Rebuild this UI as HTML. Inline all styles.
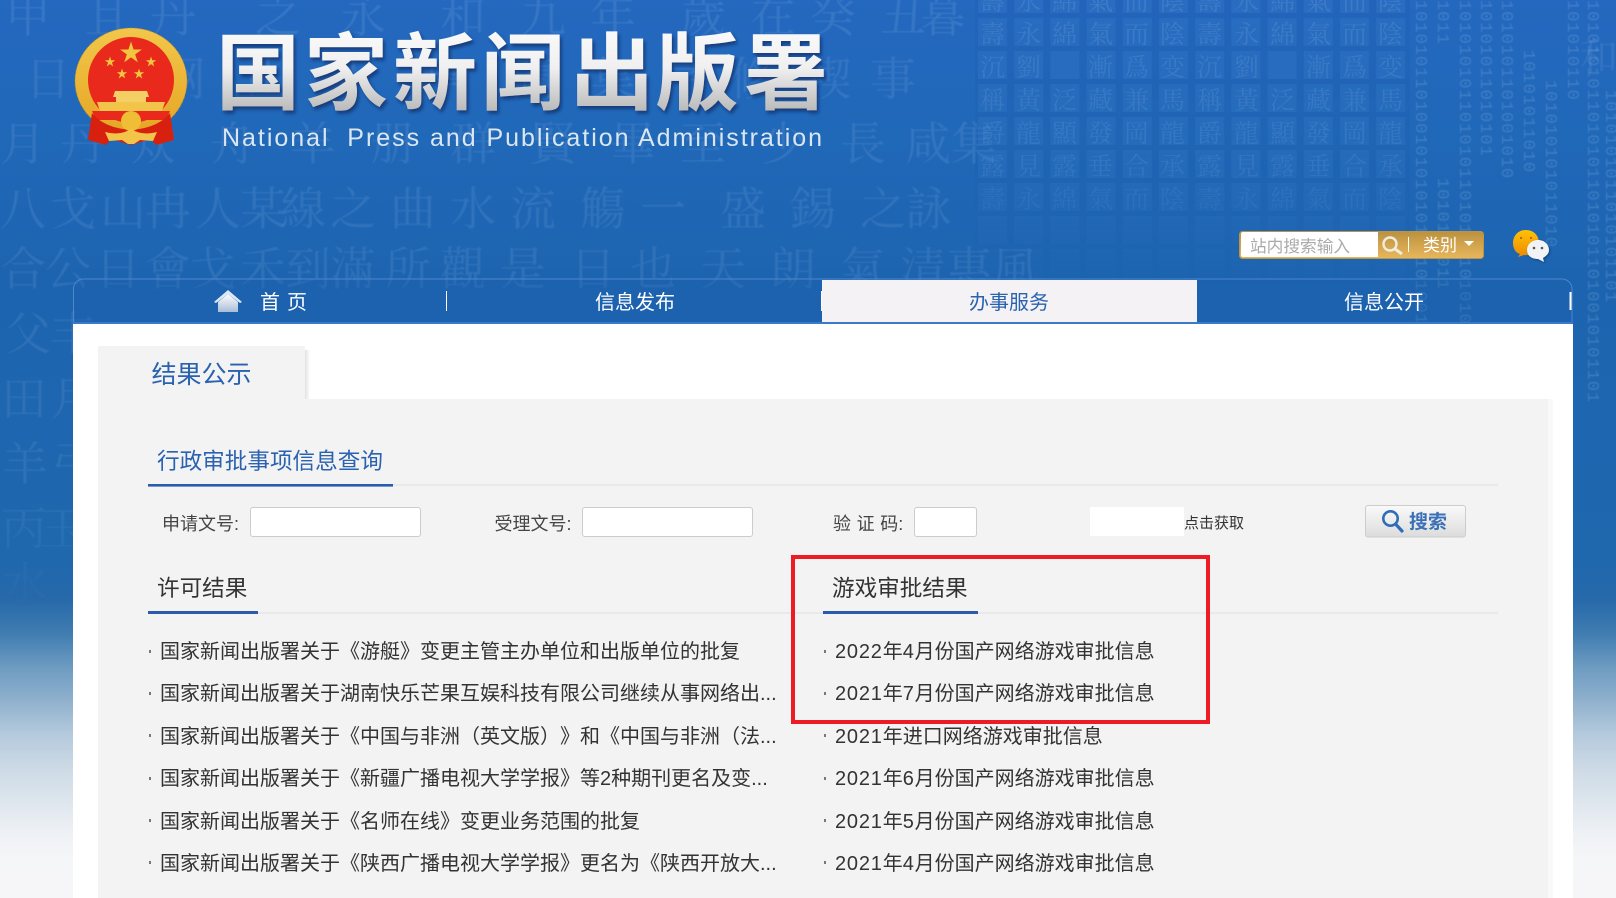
<!DOCTYPE html>
<html lang="zh-CN">
<head>
<meta charset="utf-8">
<title>国家新闻出版署</title>
<style>
html,body{margin:0;padding:0;width:1616px;height:898px;overflow:hidden}
body{position:relative;font-family:"Liberation Sans","Noto Sans CJK SC",sans-serif;color:#333;text-spacing-trim:space-all;
background:linear-gradient(180deg,#2468bf 0,#2068b8 140px,#1d64b0 280px,#1f68ae 560px,#2769aa 600px,#3f7cb0 633px,#6d9bc1 667px,#8fb0cd 700px,#b3c9dc 733px,#ccd9e5 767px,#dde5ed 800px,#eef1f5 833px,#f5f6f8 860px,#f6f6f8 898px)}
.a{position:absolute;white-space:nowrap}
svg{position:absolute;left:0;top:0}
.nav{font-size:20px;line-height:30px;color:#fff;top:288px}
.row{font-size:20px;line-height:30px;color:#333;font-feature-settings:"palt" 0;text-spacing-trim:space-all}
.row i{font-style:normal;letter-spacing:.8px}
.lab{font-size:18px;line-height:26px;color:#444}
.inp{position:absolute;background:#fff;border:1px solid #ccc;border-radius:3px;box-sizing:border-box;top:507px;height:30px}
.dot{position:absolute;width:2px;height:3px;background:#777}
</style>
</head>
<body>
<svg width="1616" height="898" viewBox="0 0 1616 898" aria-hidden="true">
<defs>
<mask id="m1"><rect x="0" y="0" width="1616" height="620" fill="url(#fm)"/></mask>
<linearGradient id="fm" x1="0" y1="0" x2="0" y2="1"><stop offset="0" stop-color="#fff"/><stop offset=".8" stop-color="#ccc"/><stop offset="1" stop-color="#000"/></linearGradient>
<mask id="m2"><rect x="960" y="0" width="460" height="290" fill="url(#fs)"/></mask>
<linearGradient id="fs" x1="0" y1="0" x2="0" y2="1"><stop offset="0" stop-color="#fff"/><stop offset=".55" stop-color="#bbb"/><stop offset="1" stop-color="#000"/></linearGradient>
<pattern id="seal" x="975" y="-17" width="36.2" height="33" patternUnits="userSpaceOnUse"><rect width="36.2" height="33" fill="#103f88" fill-opacity=".16"/><rect x="3" y="2" width="29" height="28" fill="#3b7fd2" fill-opacity=".5"/></pattern>
<linearGradient id="silver" x1="0" y1="0" x2="0" y2="1"><stop offset="0" stop-color="#fff"/><stop offset=".5" stop-color="#f0f0f0"/><stop offset="1" stop-color="#a5a5a5"/></linearGradient>
<filter id="sh" x="-5%" y="-10%" width="110%" height="125%"><feDropShadow dx="2" dy="3" stdDeviation="1.5" flood-color="#0a2a60" flood-opacity=".7"/></filter>
<filter id="bl" x="-5%" y="-5%" width="110%" height="110%"><feGaussianBlur stdDeviation=".5"/></filter>
<linearGradient id="gold" x1="0" y1="0" x2="0" y2="1"><stop offset="0" stop-color="#f2c74a"/><stop offset="1" stop-color="#e5a524"/></linearGradient>
<linearGradient id="sb" x1="0" y1="0" x2="0" y2="1"><stop offset="0" stop-color="#bb913f"/><stop offset="1" stop-color="#e8b75c"/></linearGradient>
<linearGradient id="yb" x1="0" y1="0" x2="0" y2="1"><stop offset="0" stop-color="#ffc107"/><stop offset="1" stop-color="#ee8a00"/></linearGradient>
<linearGradient id="hb" x1="0" y1="0" x2="0" y2="1"><stop offset="0" stop-color="#fff"/><stop offset="1" stop-color="#a9bdd6"/></linearGradient>
<linearGradient id="btn" x1="0" y1="0" x2="0" y2="1"><stop offset="0" stop-color="#fafafa"/><stop offset="1" stop-color="#dcdcdc"/></linearGradient>
<linearGradient id="tabsh" x1="0" y1="0" x2="1" y2="0"><stop offset="0" stop-color="#e2e2e2"/><stop offset="1" stop-color="#fff"/></linearGradient>
<polygon id="st" points="0,-1 .225,-.309 .951,-.309 .363,.118 .588,.809 0,.382 -.588,.809 -.363,.118 -.951,-.309 -.225,-.309"/>
</defs>

<!-- faint background calligraphy -->
<g mask="url(#m1)" filter="url(#bl)" font-family="'Noto Serif CJK SC','WenQuanYi Zen Hei',serif" font-size="46" fill="#9cc3ee" fill-opacity=".16">
<text x="5 85 150 255 340 440 520 590 680 750 810 880 920" y="32">甲且丹之永和九年歲在癸丑暮</text>
<text x="25 85 160 245 330 420 510 590 660 730 805 870" y="95">日火网山水亭蘭集序修禊事</text>
<text x="0 60 130 210 290 370 450 530 610 680 760 840 905" y="160">月丹众舟羊册群賢畢至少長咸集</text>
<text x="0 50 100 145 195 240 280 330 390 450 510 580 640 720 790 860" y="225">八戈山冉人某線之曲水流觴一盛錫之詠</text>
<text x="0 45 95 145 190 240 285 330 385 440 500 570 630 700 770 840 900" y="285">合公日會戈禾到滿所觀是日也天朗氣清惠風</text>
<text x="5 50" y="350">父丰</text><text x="1 50" y="415">田月</text><text x="2 50" y="480">羊弓</text><text x="1 40" y="545">丙玉</text><text x="2" y="600">水</text>
<text x="1580" y="70" font-size="38">和</text>
</g>

<!-- seal grid -->
<g mask="url(#m2)"><rect x="975" y="0" width="435" height="290" fill="url(#seal)" fill-opacity=".5"/>
<g font-family="'Noto Serif CJK SC',serif" font-size="25" fill="#bcd8f7" fill-opacity=".14">
<text x="980 1016 1052 1088 1124 1160 1197 1234 1270 1306 1342 1378" y="10">壽永綿氣而陰壽永綿氣而陰</text>
<text x="980 1016 1052 1088 1124 1160 1197 1234 1270 1306 1342 1378" y="43">壽永綿氣而陰壽永綿氣而陰</text>
<text x="980 1016 1088 1124 1160 1197 1234 1306 1342 1378" y="76">沉劉漸爲变沉劉漸爲变</text>
<text x="980 1016 1052 1088 1124 1160 1197 1234 1270 1306 1342 1378" y="109">稱黃泛藏兼馬稱黃泛藏兼馬</text>
<text x="980 1016 1052 1088 1124 1160 1197 1234 1270 1306 1342 1378" y="142">爵龍顯發岡龍爵龍顯發岡龍</text>
<text x="980 1016 1052 1088 1124 1160 1197 1234 1270 1306 1342 1378" y="175">露見露垂合承露見露垂合承</text>
<text x="980 1016 1052 1088 1124 1160 1197 1234 1270 1306 1342 1378" y="208">壽永綿氣而陰壽永綿氣而陰</text>
</g></g>

<!-- binary columns -->
<g font-family="'Liberation Mono',monospace" font-size="17" fill="#a9cdf2" fill-opacity=".22" letter-spacing="1" filter="url(#bl)">
<text transform="translate(1416,0) rotate(90)">10101011010010101010101101001010</text>
<text transform="translate(1438,0) rotate(90)">1011</text>
<text transform="translate(1438,178) rotate(90)">1010101011</text>
<text transform="translate(1460,0) rotate(90)">101010101101010110101001010101</text>
<text transform="translate(1481,0) rotate(90)">10101011010101</text>
<text transform="translate(1502,0) rotate(90)">1010101101001010</text>
<text transform="translate(1524,50) rotate(90)">10101011010</text>
<text transform="translate(1546,80) rotate(90)">101010101011010</text>
<text transform="translate(1568,0) rotate(90)">101010110</text>
<text transform="translate(1588,0) rotate(90)">101010101101010110101011010010101101</text>
<text transform="translate(1606,90) rotate(90)">1010101011010101101</text>
</g>

<!-- emblem -->
<g>
<ellipse cx="131" cy="81" rx="56" ry="53" fill="url(#gold)"/>
<ellipse cx="131" cy="81" rx="56" ry="53" fill="none" stroke="#c98a16" stroke-width="1" stroke-dasharray="3 2" stroke-opacity=".6"/>
<ellipse cx="131" cy="80" rx="43" ry="43" fill="#e8291c"/>
<use href="#st" transform="translate(131,53) scale(11.5)" fill="#f0c53f"/>
<use href="#st" transform="translate(110,62) scale(5.5)" fill="#f0c53f"/>
<use href="#st" transform="translate(151,62) scale(5.5)" fill="#f0c53f"/>
<use href="#st" transform="translate(122,74) scale(5.5)" fill="#f0c53f"/>
<use href="#st" transform="translate(139,74) scale(5.5)" fill="#f0c53f"/>
<path d="M115 91 H147 L149 97 H146 V102 H116 V97 H113 Z" fill="#f3cf66"/>
<path d="M97 102 H165 L162 111 H100 Z" fill="#f2c54a"/>
<path d="M92 111 H170 L166 120 H96 Z" fill="#e8291c"/>
<path d="M92 113 L88 140 L106 145 L111 139 L131 145 L151 139 L156 145 L174 140 L170 113 Q158 128 131 130 Q104 128 92 113 Z" fill="#d8200f"/>
<circle cx="131" cy="121" r="10" fill="#efbd36"/>
<path d="M105 132 Q120 136 131 129 Q142 136 157 132 L153 141 L140 140 L134 144 H128 L122 140 L109 141 Z" fill="#f2c54a"/>
</g>

<!-- logotype -->
<g filter="url(#sh)" font-family="'Noto Sans CJK SC','WenQuanYi Zen Hei',sans-serif" font-weight="700" font-size="84" fill="url(#silver)">
<text x="216 304 393 481 570 655 744" y="103">国家新闻出版署</text>
</g>
<text x="222" y="146" font-family="'Liberation Sans',sans-serif" font-size="25" fill="#dbe6f1" textLength="600" xml:space="preserve">National  Press and Publication Administration</text>

<!-- search -->
<rect x="1239.5" y="231.5" width="244" height="27" rx="3" fill="url(#sb)" stroke="#bf9340"/>
<path d="M1241 234 a2 2 0 0 1 2-2 H1378 V257 H1243 a2 2 0 0 1-2-2 Z" fill="#fff"/>
<circle cx="1390" cy="244" r="6.5" fill="none" stroke="#f1ece0" stroke-width="2.4"/>
<path d="M1395 249 L1402 254" stroke="#f1ece0" stroke-width="3"/>
<path d="M1408.5 237 V252" stroke="#fff" stroke-width="1"/>
<path d="M1464 241 H1474 L1469 246 Z" fill="#fff"/>
<!-- wechat -->
<path d="M1526 230 C1518 230 1513 236 1513 243 C1513 249 1516 253 1520 254 L1518 257 L1524 255 C1532 256 1539 250 1539 243 C1539 236 1534 230 1526 230 Z" fill="url(#yb)"/>
<circle cx="1521" cy="238" r="1" fill="#9a5a00"/><circle cx="1531" cy="238" r="1" fill="#9a5a00"/>
<path d="M1538 240 C1531 240 1527 245 1527 250 C1527 256 1532 259 1538 259 L1544 262 L1543 258 C1546 256 1549 254 1549 250 C1549 245 1545 240 1538 240 Z" fill="#f1f3f5" filter="drop-shadow(1px 1px 1px rgba(10,30,70,.5))"/>
<circle cx="1534" cy="248" r="1.3" fill="#555"/><circle cx="1542" cy="248" r="1.3" fill="#555"/>

<!-- nav frame -->
<path d="M73.5 323 V289 a10 10 0 0 1 10-10 H1562 a10 10 0 0 1 10 10 V323" fill="#1c5fae" fill-opacity=".28" stroke="#4d87cc" stroke-width="1"/>
<rect x="73" y="322" width="1500" height="2" fill="#3a7acb"/>
<rect x="822" y="280" width="375" height="42" fill="#f4f2f4"/>
<rect x="73" y="324" width="1500" height="574" fill="#fff"/>
<path d="M446.5 291 V311 M821.5 291 V311" stroke="#fff" stroke-width="1"/>
<path d="M1570.5 292 V310" stroke="#fff" stroke-width="2"/>
<!-- home icon -->
<path d="M228 290 L242 302 L240 303 L228 294 L216 303 L214 302 Z" fill="#dfe9f5"/>
<path d="M228 294 L238 302 V312 H218 V302 Z" fill="url(#hb)"/>

<!-- panel -->
<rect x="305" y="350" width="5" height="49" fill="url(#tabsh)"/>
<rect x="1548" y="399" width="5" height="499" fill="#f9f9f9"/>
<rect x="98" y="346" width="207" height="53" fill="#f3f3f3"/>
<rect x="98" y="399" width="1450" height="499" fill="#f3f3f3"/>

<rect x="148" y="484" width="1350" height="2" fill="#e9e9e9"/>
<rect x="148" y="484" width="245" height="2.6" fill="#2a5cab"/>
<rect x="148" y="612" width="1350" height="2" fill="#e9e9e9"/>
<rect x="148" y="611" width="110" height="3" fill="#2a5cab"/>
<rect x="823" y="611" width="155" height="3" fill="#2a5cab"/>

<!-- search button -->
<rect x="1365.5" y="505.5" width="100" height="31.5" rx="2.5" fill="url(#btn)" stroke="#ccc"/>
<circle cx="1390.5" cy="518.5" r="7.2" fill="none" stroke="#2f6db8" stroke-width="2.6"/>
<path d="M1395.5 524 L1402 531" stroke="#2f6db8" stroke-width="3.2" stroke-linecap="round"/>

<!-- red frame -->
<rect x="793" y="557" width="415" height="165" fill="none" stroke="#ed1c24" stroke-width="4"/>
</svg>

<div class="a" style="left:1250px;top:234px;font-size:16.7px;line-height:26px;color:#aaa">站内搜索输入</div>
<div class="a" style="left:1423px;top:233px;font-size:17px;line-height:26px;color:#fff">类别</div>

<div class="a nav" style="left:260px">首</div>
<div class="a nav" style="left:287px">页</div>
<div class="a nav" style="left:595px">信息发布</div>
<div class="a nav" style="left:969px;color:#2a62b0">办事服务</div>
<div class="a nav" style="left:1344px">信息公开</div>

<div class="a" style="left:151.5px;top:357px;font-size:25px;line-height:36px;color:#2a62b0">结果公示</div>
<div class="a" style="left:157px;top:445px;font-size:22.6px;line-height:34px;color:#2a62b0">行政审批事项信息查询</div>

<div class="a lab" style="left:162px;top:511px">申请文号:</div>
<div class="inp" style="left:250px;width:171px"></div>
<div class="a lab" style="left:494.5px;top:511px">受理文号:</div>
<div class="inp" style="left:582px;width:171px"></div>
<div class="a lab" style="left:833px;top:511px;word-spacing:.6px">验 证 码:</div>
<div class="inp" style="left:914px;width:63px"></div>
<div class="a" style="left:1090px;top:507px;width:94px;height:29px;background:#fff"></div>
<div class="a" style="left:1184px;top:512px;font-size:15px;line-height:24px;color:#333">点击获取</div>
<div class="a" style="left:1409px;top:508px;font-size:19px;line-height:30px;font-weight:700;color:#3a70b8">搜索</div>

<div class="a" style="left:157px;top:572px;font-size:22.6px;line-height:34px;color:#333">许可结果</div>
<div class="a" style="left:832px;top:572px;font-size:22.6px;line-height:34px;color:#333">游戏审批结果</div>

<div class="dot" style="left:149px;top:650px"></div>
<div class="dot" style="left:149px;top:692px"></div>
<div class="dot" style="left:149px;top:734px"></div>
<div class="dot" style="left:149px;top:777px"></div>
<div class="dot" style="left:149px;top:819px"></div>
<div class="dot" style="left:149px;top:861px"></div>
<div class="dot" style="left:824px;top:650px"></div>
<div class="dot" style="left:824px;top:692px"></div>
<div class="dot" style="left:824px;top:734px"></div>
<div class="dot" style="left:824px;top:777px"></div>
<div class="dot" style="left:824px;top:819px"></div>
<div class="dot" style="left:824px;top:861px"></div>

<div class="a row" style="left:160px;top:637px">国家新闻出版署关于《游艇》变更主管主办单位和出版单位的批复</div>
<div class="a row" style="left:160px;top:679px">国家新闻出版署关于湖南快乐芒果互娱科技有限公司继续从事网络出...</div>
<div class="a row" style="left:160px;top:722px">国家新闻出版署关于《中国与非洲（英文版）》和《中国与非洲（法...</div>
<div class="a row" style="left:160px;top:764px">国家新闻出版署关于《新疆广播电视大学学报》等2种期刊更名及变...</div>
<div class="a row" style="left:160px;top:807px">国家新闻出版署关于《名师在线》变更业务范围的批复</div>
<div class="a row" style="left:160px;top:849px">国家新闻出版署关于《陕西广播电视大学学报》更名为《陕西开放大...</div>

<div class="a row" style="left:835px;top:637px"><i>2022</i>年<i>4</i>月份国产网络游戏审批信息</div>
<div class="a row" style="left:835px;top:679px"><i>2021</i>年<i>7</i>月份国产网络游戏审批信息</div>
<div class="a row" style="left:835px;top:722px"><i>2021</i>年进口网络游戏审批信息</div>
<div class="a row" style="left:835px;top:764px"><i>2021</i>年<i>6</i>月份国产网络游戏审批信息</div>
<div class="a row" style="left:835px;top:807px"><i>2021</i>年<i>5</i>月份国产网络游戏审批信息</div>
<div class="a row" style="left:835px;top:849px"><i>2021</i>年<i>4</i>月份国产网络游戏审批信息</div>
</body>
</html>
